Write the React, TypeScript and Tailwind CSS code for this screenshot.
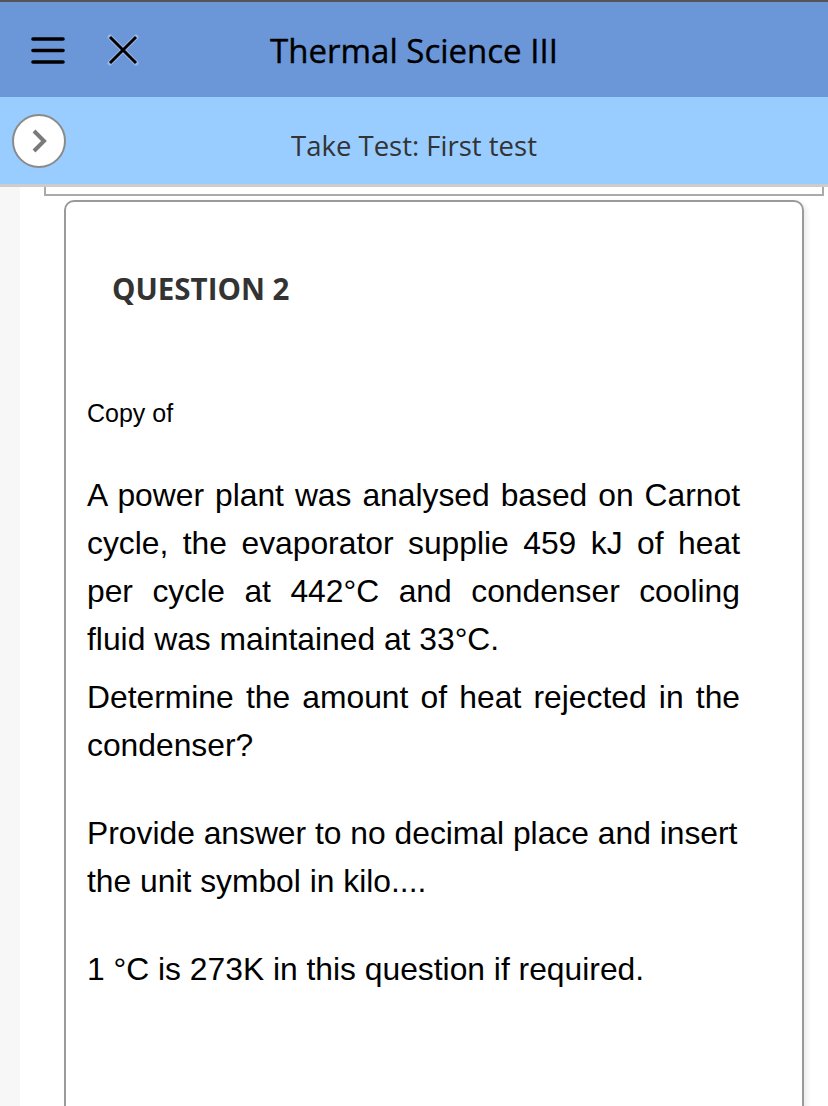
function MenuIcon() {
  return (
    <svg width="34" height="28" viewBox="0 0 34 28" fill="none">
      <path d="M2 3h30M2 14.5h30M2 26h30" stroke="#000" strokeWidth="3.6" strokeLinecap="round" />
    </svg>
  )
}

function CloseIcon() {
  return (
    <svg width="32" height="32" viewBox="0 0 32 32" fill="none">
      <path d="M3 3l26 26M29 3L3 29" stroke="#a9c3ea" strokeWidth="5" strokeLinecap="round" opacity="0.7" />
      <path d="M3 3l26 26M29 3L3 29" stroke="#000" strokeWidth="3" />
    </svg>
  )
}

function ExpandButton() {
  return (
    <div className="w-[54px] h-[54px] rounded-full bg-white border-2 border-[#8a8a8a] flex items-center justify-center">
      <svg width="18" height="26" viewBox="0 0 18 26" fill="none">
        <path d="M4 3l10 10L4 23" stroke="#7a7a7a" strokeWidth="4" />
      </svg>
    </div>
  )
}

const body = "font-['Liberation_Sans',Arial,sans-serif] text-black"

export default function App() {
  return (
    <div className="h-[1106px] overflow-hidden bg-white">
      <header className="h-[97px] bg-[#6b97d9] border-t-2 border-[#555] grid grid-cols-[1fr_auto_1fr] items-center">
        <div className="flex items-center pl-[31px] gap-[42px]">
          <MenuIcon />
          <CloseIcon />
        </div>
        <h1 className="font-['Open_Sans',sans-serif] text-[33px] text-black pt-[2px] [-webkit-text-stroke:0.4px_#000]">
          Thermal Science III
        </h1>
        <div />
      </header>

      <div className="h-[90px] bg-[#99ccff] border-b-[3px] border-[#cccccc] grid grid-cols-[1fr_auto_1fr] items-center">
        <div className="pl-[12px]">
          <ExpandButton />
        </div>
        <h2 className="font-['Open_Sans',sans-serif] text-[27.5px] text-[#333] mt-[11px]">
          Take Test: First test
        </h2>
        <div />
      </div>

      <div className="flex h-full">
        <div className="w-[20px] bg-[#f7f7f7] shrink-0" />
        <div className="flex-1">
          <div className="ml-[24px] mr-[4px] h-[9px] border-x-2 border-b-2 border-[#aaaaaa]" />

          <div className="ml-[44px] mr-[24px] mt-[4px] h-[1000px] border-2 border-[#9a9a9a] rounded-[10px] shadow-[3px_2px_5px_rgba(0,0,0,0.08)] pl-[21px] pr-[62px]">
            <h3 className="mt-[67px] pl-[25px] font-['Open_Sans',sans-serif] font-bold text-[29.5px] leading-[40px] text-[#333]">
              QUESTION 2
            </h3>

            <p className={`mt-[86px] text-[25px] leading-[36px] ${body}`}>Copy of</p>

            <div className={`text-[31.8px] leading-[48px] ${body}`}>
              <p className="mt-[40px] text-justify">
                A power plant was analysed based on Carnot cycle, the evaporator supplie 459 kJ of heat per
                cycle at 442°C and condenser cooling fluid was maintained at 33°C.
              </p>
              <p className="mt-[10px] text-justify">Determine the amount of heat rejected in the condenser?</p>
              <p className="mt-[40px]">
                Provide answer to no decimal place and insert the unit symbol in kilo....
              </p>
              <p className="mt-[40px]">1 °C is 273K in this question if required.</p>
            </div>
          </div>
        </div>
      </div>
    </div>
  )
}
